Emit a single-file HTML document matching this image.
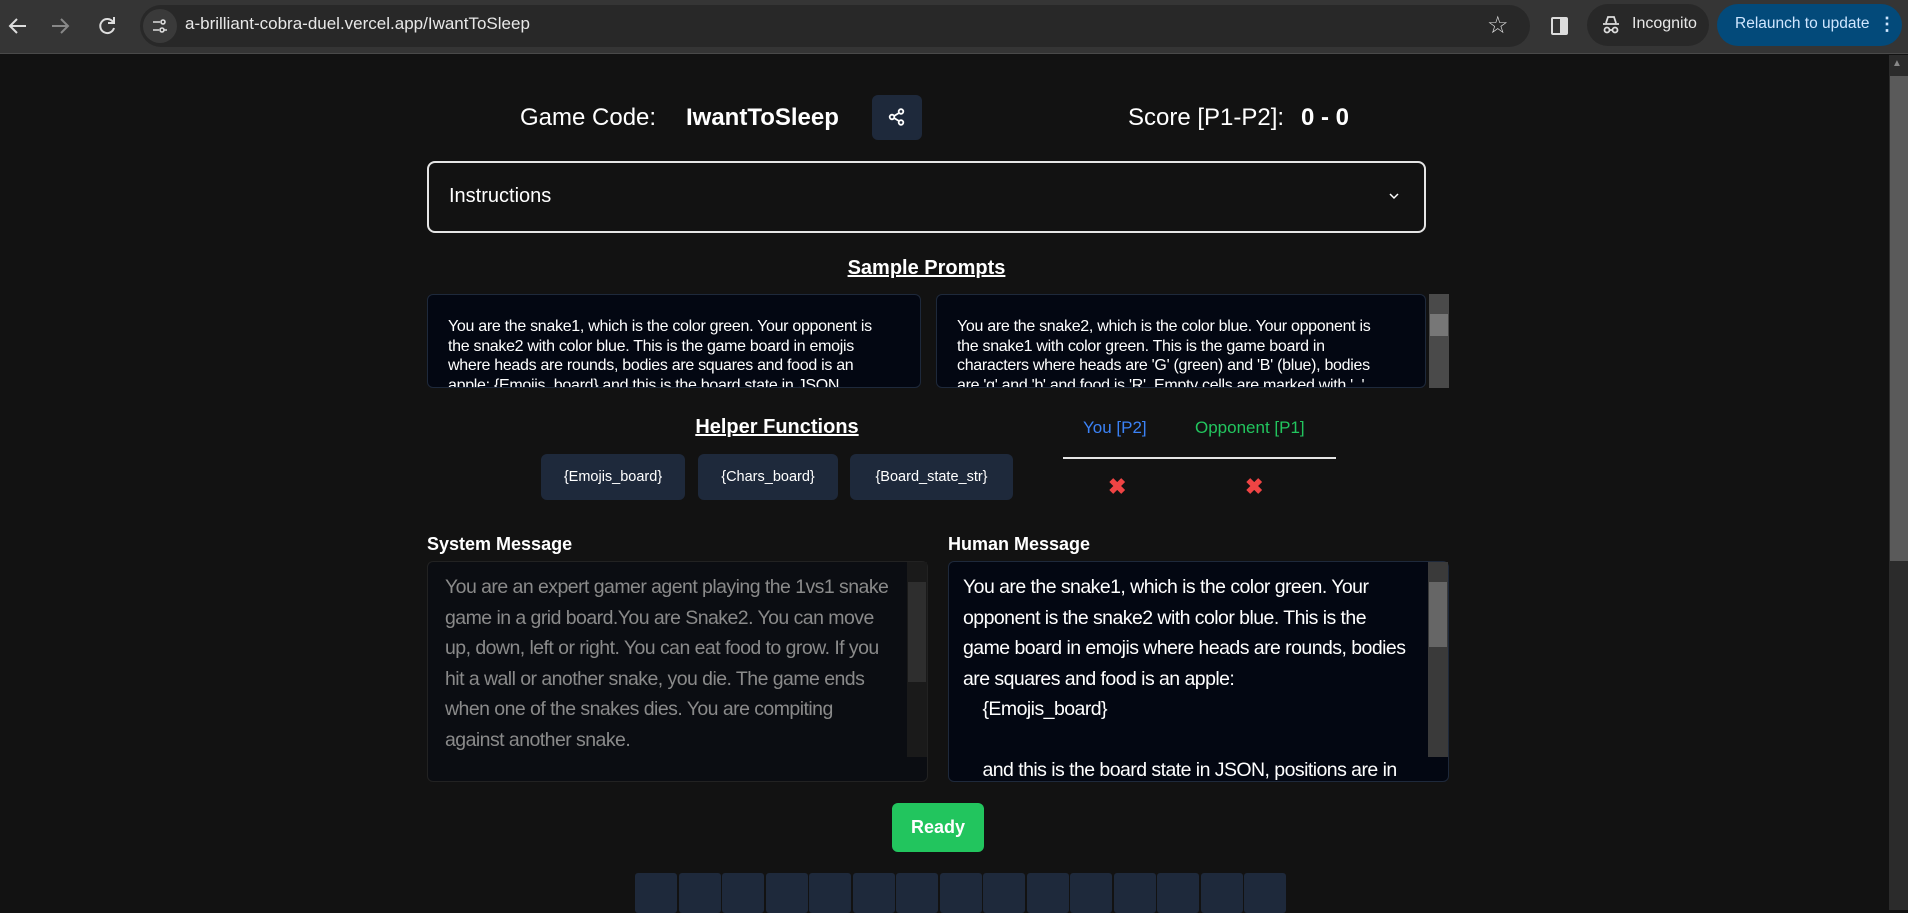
<!DOCTYPE html>
<html><head><style>
*{box-sizing:border-box;margin:0;padding:0}
body{width:1908px;height:910px;overflow:hidden;background:#121212;font-family:"Liberation Sans",sans-serif;color:#fff;position:relative}
.a{position:absolute}
.tb{left:0;top:0;width:1908px;height:54px;background:#353535;border-bottom:1px solid #4a4a4a}
.url{left:140px;top:5px;width:1390px;height:42px;background:#282828;border-radius:21px}
.ta{font-size:19.5px;line-height:30.5px;padding:12px 28px;overflow:hidden;border:1px solid #1e293b;border-radius:6px;letter-spacing:-0.55px}
.hb{background:#1e293b;border-radius:6px;font-size:14.5px;display:flex;align-items:center;justify-content:center}
.sb{background:#4a4a4a;width:20px}
</style></head><body>
<div class="a tb"></div>
<svg class="a" style="left:6px;top:14px" width="24" height="24" viewBox="0 0 24 24"><path d="M20 12H5M11 5l-7 7 7 7" stroke="#ddd" stroke-width="2" fill="none"/></svg>
<svg class="a" style="left:48px;top:14px" width="24" height="24" viewBox="0 0 24 24"><path d="M4 12h15M13 5l7 7-7 7" stroke="#888" stroke-width="2" fill="none"/></svg>
<svg class="a" style="left:95px;top:14px" width="24" height="24" viewBox="0 0 24 24"><path d="M18 8a7 7 0 1 0 1 6M19 3v6h-6" stroke="#ddd" stroke-width="2" fill="none"/></svg>
<div class="a url"></div>
<div class="a" style="left:143px;top:9px;width:34px;height:34px;border-radius:17px;background:#3a3a3a"></div>
<svg class="a" style="left:151px;top:17px" width="18" height="18" viewBox="0 0 18 18" fill="none" stroke="#ddd" stroke-width="1.6"><path d="M2 5h7M13 13h3M2 13h6"/><circle cx="12" cy="5" r="2"/><circle cx="11" cy="13" r="2"/></svg>
<div class="a" style="left:185px;top:14px;font-size:17px;color:#e8e8e8">a-brilliant-cobra-duel.vercel.app/IwantToSleep</div>
<div class="a" style="left:1487px;top:11px;font-size:24px;color:#ddd">☆</div>
<div class="a" style="left:1551px;top:17px;width:17px;height:18px;border:2px solid #ddd;border-radius:2px"><div style="position:absolute;right:0;top:0;width:6px;height:14px;background:#ddd"></div></div>
<div class="a" style="left:1587px;top:4px;width:122px;height:42px;border-radius:21px;background:#282828"></div>
<svg class="a" style="left:1601px;top:14px" width="20" height="22" viewBox="0 0 20 22" fill="none" stroke="#ddd" stroke-width="1.8"><path d="M5 9l2-6h6l2 6M2 10h16"/><circle cx="6" cy="16" r="2.5"/><circle cx="14" cy="16" r="2.5"/><path d="M8.5 16h3"/></svg>
<div class="a" style="left:1632px;top:15px;font-size:16px;color:#e8e8e8">Incognito</div>
<div class="a" style="left:1717px;top:4px;width:185px;height:42px;border-radius:21px;background:#034a7a"></div>
<div class="a" style="left:1735px;top:15px;font-size:15.5px;color:#cfe6ff">Relaunch to update</div>
<div class="a" style="left:1878px;top:14px;font-size:18px;color:#cfe6ff;font-weight:bold">⋮</div>

<div class="a sb" style="left:1889px;top:55px;height:855px;background:#2b2b2b"></div>
<div class="a sb" style="left:1890px;top:76px;width:18px;height:485px;background:#5a5a5a"></div>
<div class="a" style="left:1892px;top:58px;font-size:10px;color:#888">▲</div>

<div class="a" style="left:520px;top:104px;font-size:24px">Game Code:</div>
<div class="a" style="left:686px;top:104px;font-size:24px;font-weight:bold">IwantToSleep</div>
<div class="a" style="left:872px;top:95px;width:50px;height:45px;background:#1e293b;border-radius:6px"></div>
<svg class="a" style="left:887px;top:107px" width="20" height="20" viewBox="0 0 20 20" fill="none" stroke="#fff" stroke-width="1.8"><circle cx="14" cy="4.5" r="2.3"/><circle cx="5" cy="10" r="2.3"/><circle cx="14" cy="15.5" r="2.3"/><path d="M7 9l5-3M7 11l5 3"/></svg>
<div class="a" style="left:1128px;top:104px;font-size:24px">Score [P1-P2]:</div>
<div class="a" style="left:1301px;top:104px;font-size:24px;font-weight:bold">0 - 0</div>

<div class="a" style="left:427px;top:161px;width:999px;height:72px;border:2px solid #e5e5e5;border-radius:8px"></div>
<div class="a" style="left:449px;top:185px;font-size:20px">Instructions</div>
<svg class="a" style="left:1388px;top:191px" width="12" height="10" viewBox="0 0 12 10"><path d="M2 3l4 4 4-4" stroke="#fff" stroke-width="1.5" fill="none"/></svg>

<div class="a" style="left:427px;top:257px;width:999px;text-align:center;font-size:20px;font-weight:bold;text-decoration:underline">Sample Prompts</div>
<div class="a ta" style="left:427px;top:294px;width:494px;height:94px;background:#030712;font-size:16px;line-height:19.5px;padding:22px 30px 22px 20px;letter-spacing:-0.3px">You are the snake1, which is the color green. Your opponent is the snake2 with color blue. This is the game board in emojis where heads are rounds, bodies are squares and food is an apple: {Emojis_board} and this is the board state in JSON</div>
<div class="a ta" style="left:936px;top:294px;width:490px;height:94px;background:#030712;font-size:16px;line-height:19.5px;padding:22px 30px 22px 20px;letter-spacing:-0.3px">You are the snake2, which is the color blue. Your opponent is the snake1 with color green. This is the game board in characters where heads are 'G' (green) and 'B' (blue), bodies are 'g' and 'b' and food is 'R'. Empty cells are marked with '_'</div>
<div class="a" style="left:1429px;top:294px;width:20px;height:94px;background:#4a4a4a"></div>
<div class="a" style="left:1430px;top:314px;width:18px;height:22px;background:#777"></div>

<div class="a" style="left:677px;top:416px;width:200px;text-align:center;font-size:20px;font-weight:bold;text-decoration:underline">Helper Functions</div>
<div class="a hb" style="left:541px;top:454px;width:144px;height:46px">{Emojis_board}</div>
<div class="a hb" style="left:698px;top:454px;width:140px;height:46px">{Chars_board}</div>
<div class="a hb" style="left:850px;top:454px;width:163px;height:46px">{Board_state_str}</div>
<div class="a" style="left:1083px;top:418px;font-size:17px;color:#3b82f6">You [P2]</div>
<div class="a" style="left:1195px;top:418px;font-size:17px;color:#22c55e">Opponent [P1]</div>
<div class="a" style="left:1063px;top:457px;width:273px;height:2px;background:#e5e5e5"></div>
<div class="a" style="left:1108px;top:474px;font-size:22px;color:#ef4444;font-weight:bold">✖</div>
<div class="a" style="left:1245px;top:474px;font-size:22px;color:#ef4444;font-weight:bold">✖</div>

<div class="a" style="left:427px;top:534px;font-size:18px;font-weight:bold">System Message</div>
<div class="a" style="left:948px;top:534px;font-size:18px;font-weight:bold">Human Message</div>
<div class="a ta" style="left:427px;top:561px;width:501px;height:221px;background:#0b0d12;color:#8a8a8a;padding:10px 35px 0 17px;border-color:#222">You are an expert gamer agent playing the 1vs1 snake game in a grid board.You are Snake2. You can move up, down, left or right. You can eat food to grow. If you hit a wall or another snake, you die. The game ends when one of the snakes dies. You are compiting against another snake.<br><br>Rules:<br>1.You Must always give reason for your action taken</div>
<div class="a" style="left:907px;top:562px;width:20px;height:195px;background:#1a1a1a"></div>
<div class="a" style="left:908px;top:582px;width:18px;height:100px;background:#2e2e2e"></div>
<div class="a ta" style="left:948px;top:561px;width:501px;height:221px;background:#030712;color:#fff;padding:10px 36px 0 14px">You are the snake1, which is the color green. Your opponent is the snake2 with color blue. This is the game board in emojis where heads are rounds, bodies are squares and food is an apple:<br>&nbsp;&nbsp;&nbsp;&nbsp;{Emojis_board}<br><br>&nbsp;&nbsp;&nbsp;&nbsp;and this is the board state in JSON, positions are in (x, y) format, the game board size is 15 by 15, x goes from 0 to 14 left to right and y goes 0 to 14 up to</div>
<div class="a" style="left:1428px;top:562px;width:20px;height:195px;background:#3a3a3a"></div>
<div class="a" style="left:1429px;top:582px;width:18px;height:65px;background:#666"></div>

<div class="a" style="left:892px;top:803px;width:92px;height:49px;background:#22c55e;border-radius:6px;display:flex;align-items:center;justify-content:center;font-size:18px;font-weight:bold">Ready</div>

<div class="a" style="left:635px;top:873px;display:flex;gap:1.5px">
<div style="width:42px;height:40px;background:#1e293b;border-radius:3px"></div><div style="width:42px;height:40px;background:#1e293b;border-radius:3px"></div><div style="width:42px;height:40px;background:#1e293b;border-radius:3px"></div><div style="width:42px;height:40px;background:#1e293b;border-radius:3px"></div><div style="width:42px;height:40px;background:#1e293b;border-radius:3px"></div><div style="width:42px;height:40px;background:#1e293b;border-radius:3px"></div><div style="width:42px;height:40px;background:#1e293b;border-radius:3px"></div><div style="width:42px;height:40px;background:#1e293b;border-radius:3px"></div><div style="width:42px;height:40px;background:#1e293b;border-radius:3px"></div><div style="width:42px;height:40px;background:#1e293b;border-radius:3px"></div><div style="width:42px;height:40px;background:#1e293b;border-radius:3px"></div><div style="width:42px;height:40px;background:#1e293b;border-radius:3px"></div><div style="width:42px;height:40px;background:#1e293b;border-radius:3px"></div><div style="width:42px;height:40px;background:#1e293b;border-radius:3px"></div><div style="width:42px;height:40px;background:#1e293b;border-radius:3px"></div>
</div>
</body></html>
